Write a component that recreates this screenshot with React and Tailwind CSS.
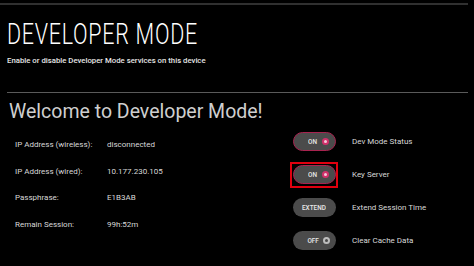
import React from 'react';

const info = [
  { label: 'IP Address (wireless):', value: 'disconnected' },
  { label: 'IP Address (wired):', value: '10.177.230.105' },
  { label: 'Passphrase:', value: 'E1B3AB' },
  { label: 'Remain Session:', value: '99h:52m' },
];

const Dot = ({ on }) => (
  <span
    className={`w-[7px] h-[7px] rounded-full border-[2px] ${on ? 'border-[#d0306a] bg-[#f4c8d8]' : 'border-[#bdbdbd] bg-[#4a4a4a]'}`}
  />
);

const Pill = ({ text, on, dot = true, focused = false }) => (
  <div
    className={`w-[48px] h-[26px] flex items-center justify-center ${focused ? 'border-2 border-[#e0000f]' : 'border-2 border-transparent'}`}
  >
    <div
      className={`w-[43px] h-[19px] rounded-full bg-[#4b4b4b] flex items-center ${dot ? 'justify-between pl-[13px] pr-[6px]' : 'justify-center'} ${on ? 'border border-[#a8234f]' : ''}`}
    >
      <span className="text-[8px] leading-none text-[#e8e8e8] font-medium scale-x-[0.8] inline-block">{text}</span>
      {dot && <Dot on={on} />}
    </div>
  </div>
);

const controls = [
  { text: 'ON', on: true, label: 'Dev Mode Status' },
  { text: 'ON', on: true, label: 'Key Server', focused: true },
  { text: 'EXTEND', on: false, dot: false, label: 'Extend Session Time' },
  { text: 'OFF', on: false, label: 'Clear Cache Data' },
];

export default function App() {
  return (
    <div className="w-[474px] h-[266px] bg-black overflow-hidden font-['Roboto',sans-serif] text-white">
      <div className="mt-[3px] h-[2px] w-[468px] bg-[#303030]" />

      <h1 className="ml-[7px] mt-[15px] text-[29px] leading-none font-light tracking-[1px] text-white origin-left scale-x-[0.74] whitespace-nowrap">
        DEVELOPER MODE
      </h1>
      <p className="ml-[7px] mt-[8px] text-[8px] leading-none font-medium text-[#e6e6e6] whitespace-nowrap origin-left scale-x-[0.97]">
        Enable or disable Developer Mode services on this device
      </p>

      <div className="ml-[7px] mt-[27px] h-px w-[461px] bg-[#5a5a5a]" />

      <h2 className="ml-[9px] mt-[9px] text-[19.5px] leading-none text-[#cfcfcf] whitespace-nowrap">
        Welcome to Developer Mode!
      </h2>

      <div className="flex mt-[7px]">
        <div className="w-[290px] pl-[15px] pt-[3px] flex flex-col">
          {info.map((row) => (
            <div key={row.label} className="h-[26.7px] flex items-center text-[8px] text-[#d8d8d8] whitespace-nowrap">
              <span className="w-[92px]">{row.label}</span>
              <span>{row.value}</span>
            </div>
          ))}
        </div>

        <div className="flex flex-col gap-[7px]">
          {controls.map((c) => (
            <div key={c.label} className="flex items-center">
              <Pill text={c.text} on={c.on} dot={c.dot !== false} focused={c.focused} />
              <span className="ml-[14px] text-[8px] text-[#d8d8d8] whitespace-nowrap">{c.label}</span>
            </div>
          ))}
        </div>
      </div>
    </div>
  );
}
